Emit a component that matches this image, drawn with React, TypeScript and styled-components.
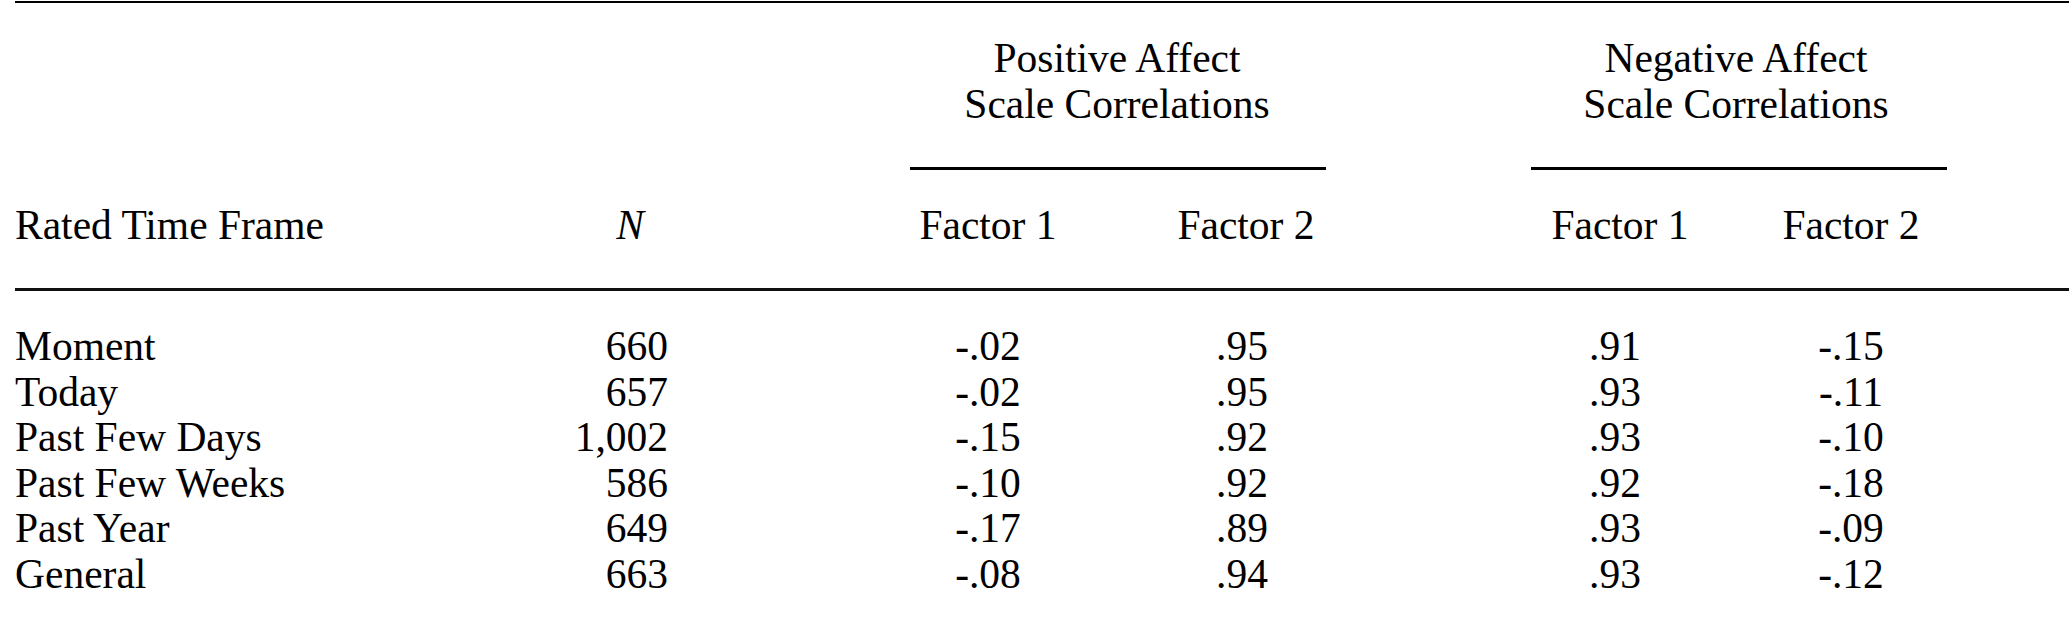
import styled, { createGlobalStyle } from 'styled-components'

const GlobalStyle = createGlobalStyle`
  html, body {
    margin: 0;
    padding: 0;
    background: #fff;
  }
`

const COLUMNS = '545px 140px 159px 258px 258px 130px 230px 232px 1fr'

const Page = styled.div`
  width: 2069px;
  height: 637px;
  padding: 1px 0 0 15px;
  box-sizing: border-box;
  overflow: hidden;
  color: #000;
  font-family: 'Liberation Serif', 'Times New Roman', serif;
  font-size: 41.5px;
  line-height: 45.5px;
`

const Table = styled.div`
  border-top: 2px solid #000;
`

const Head = styled.div`
  display: grid;
  grid-template-columns: ${COLUMNS};
  row-gap: 33.4px;
  padding: 33.2px 0 39px;
  border-bottom: 3px solid #111;
`

const Spanner = styled.div<{ col: number }>`
  grid-row: 1;
  grid-column: ${({ col }) => col} / span 2;
  text-align: center;
`

const SpannerRule = styled.div<{ left: number; right: number }>`
  height: 2.5px;
  background: #000;
  margin: 40.3px ${({ right }) => right}px 0 ${({ left }) => left}px;
`

const HeadCell = styled.div<{ col: number; align?: string; italic?: boolean }>`
  grid-row: 2;
  grid-column: ${({ col }) => col};
  text-align: ${({ align }) => align || 'center'};
  font-style: ${({ italic }) => (italic ? 'italic' : 'normal')};
  white-space: nowrap;
`

const Body = styled.div`
  padding-top: 33.2px;
`

const Row = styled.div`
  display: grid;
  grid-template-columns: ${COLUMNS};
  height: 45.5px;
`

const Label = styled.div`
  grid-column: 1;
  white-space: nowrap;
`

const Count = styled.div`
  grid-column: 2;
  text-align: right;
  padding-right: 32px;
`

const Value = styled.div<{ col: number; shift?: number }>`
  grid-column: ${({ col }) => col};
  text-align: center;
  padding-right: ${({ shift }) => shift || 0}px;
`

const rows = [
  { label: 'Moment', n: '660', values: ['-.02', '.95', '.91', '-.15'] },
  { label: 'Today', n: '657', values: ['-.02', '.95', '.93', '-.11'] },
  { label: 'Past Few Days', n: '1,002', values: ['-.15', '.92', '.93', '-.10'] },
  { label: 'Past Few Weeks', n: '586', values: ['-.10', '.92', '.92', '-.18'] },
  { label: 'Past Year', n: '649', values: ['-.17', '.89', '.93', '-.09'] },
  { label: 'General', n: '663', values: ['-.08', '.94', '.93', '-.12'] },
]

const valueCols = [
  { col: 4, shift: 0 },
  { col: 5, shift: 8 },
  { col: 7, shift: 10 },
  { col: 8, shift: 0 },
]

function App() {
  return (
    <Page>
      <GlobalStyle />
      <Table>
        <Head>
          <Spanner col={4}>
            Positive Affect
            <br />
            Scale Correlations
            <SpannerRule left={51} right={49} />
          </Spanner>
          <Spanner col={7}>
            Negative Affect
            <br />
            Scale Correlations
            <SpannerRule left={26} right={20} />
          </Spanner>
          <HeadCell col={1} align="left">Rated Time Frame</HeadCell>
          <HeadCell col={2} italic>N</HeadCell>
          <HeadCell col={4}>Factor 1</HeadCell>
          <HeadCell col={5}>Factor 2</HeadCell>
          <HeadCell col={7}>Factor 1</HeadCell>
          <HeadCell col={8}>Factor 2</HeadCell>
        </Head>
        <Body>
          {rows.map((row) => (
            <Row key={row.label}>
              <Label>{row.label}</Label>
              <Count>{row.n}</Count>
              {row.values.map((v, i) => (
                <Value key={i} col={valueCols[i].col} shift={valueCols[i].shift}>
                  {v}
                </Value>
              ))}
            </Row>
          ))}
        </Body>
      </Table>
    </Page>
  )
}

export default App
